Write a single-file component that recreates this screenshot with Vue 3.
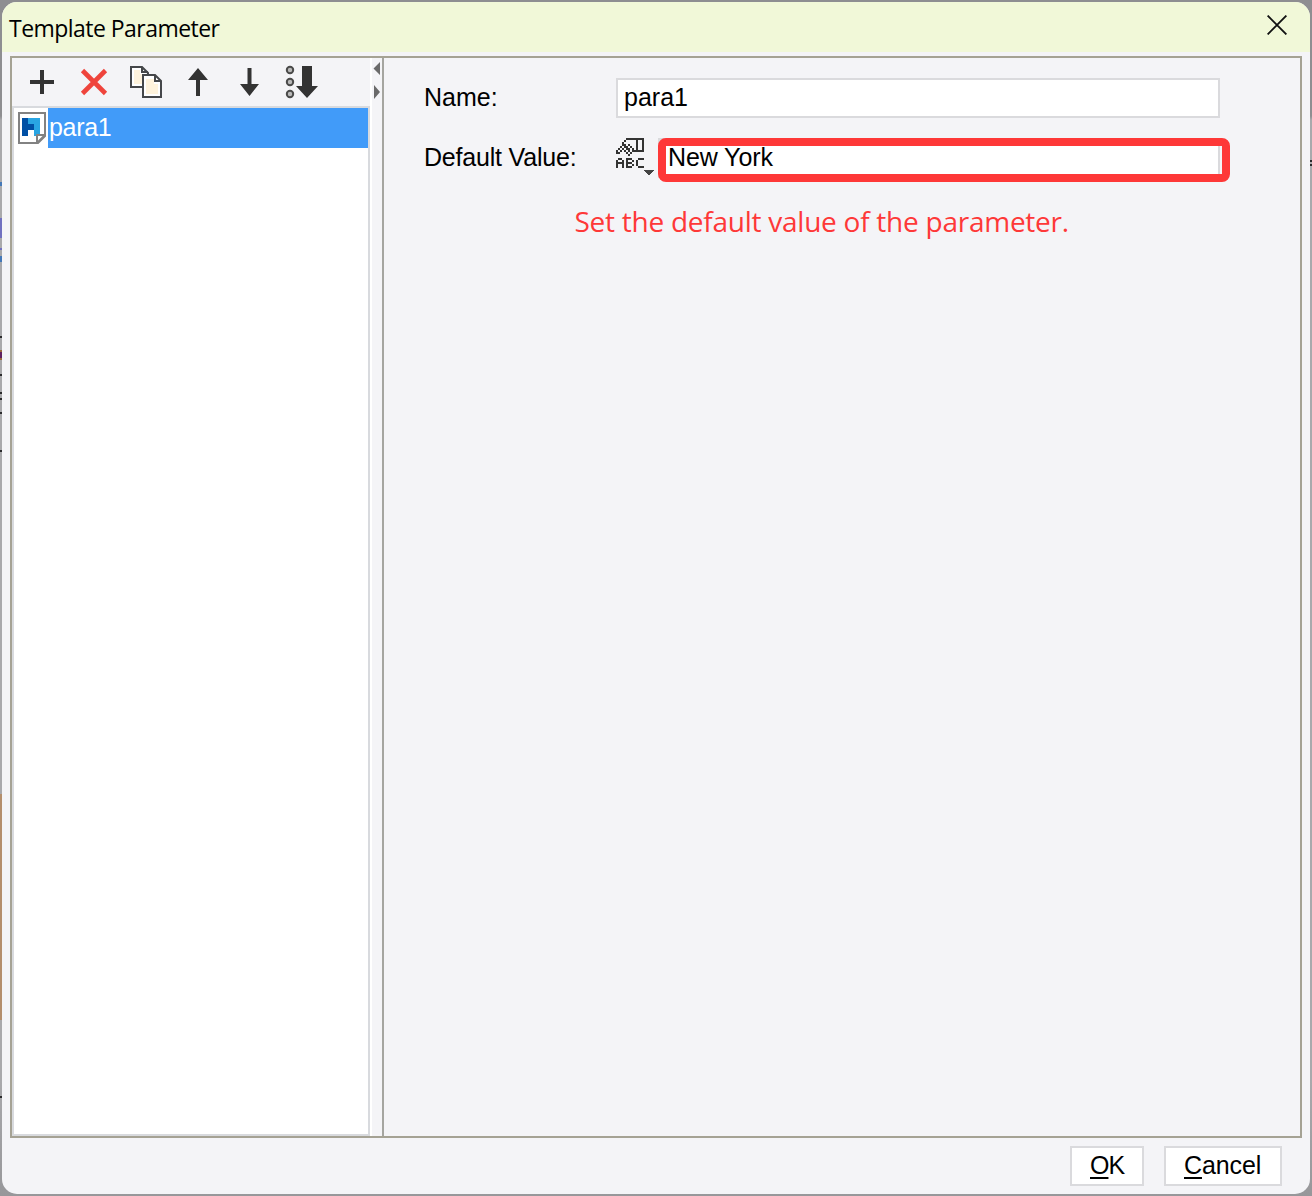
<script setup>
import { ref } from 'vue'

const name = ref('para1')
const value = ref('New York')
const params = ['para1']

// Each cell of the bitmap is a 2px square.
const typeGlyph = [
  '.....#########',
  '....#.....#..#',
  '...#......#..#',
  '...##.#...#..#',
  '..#.##.#..#..#',
  '.#.#.##.#.#..#',
  '#.#.#.#.######',
  '##...#.#......',
  '......#.......',
  '..............',
  '.##..###...###',
  '#..#.#..#.#...',
  '####.###..#...',
  '#..#.#..#.#...',
  '#..#.###...###',
]
const cells = typeGlyph.flatMap((row, y) =>
  [...row].flatMap((c, x) => (c === '#' ? [{ x: x * 2, y: y * 2 }] : []))
)

// Slivers of the window behind the dialog.
const edges = [
  { x: 0, y: 182, h: 4, c: '#4478b8' },
  { x: 0, y: 218, h: 20, c: '#7070c0' },
  { x: 0, y: 248, h: 2, c: '#7070c0' },
  { x: 0, y: 256, h: 6, c: '#4478b8' },
  { x: 0, y: 336, h: 2, c: '#2a2a2c' },
  { x: 0, y: 350, h: 10, c: '#9a6a40' },
  { x: 0, y: 352, h: 6, c: '#602060' },
  { x: 0, y: 374, h: 2, c: '#2a2a2c' },
  { x: 0, y: 392, h: 2, c: '#2a2a2c' },
  { x: 0, y: 398, h: 2, c: '#2a2a2c' },
  { x: 0, y: 412, h: 2, c: '#2a2a2c' },
  { x: 0, y: 450, h: 2, c: '#2a2a2c' },
  { x: 0, y: 794, h: 226, c: '#b48e6c' },
  { x: 0, y: 1096, h: 2, c: '#2a2a2c' },
  { x: 1310, y: 160, h: 2, c: '#2a2a2c' },
  { x: 1310, y: 164, h: 2, c: '#2a2a2c' },
]
</script>

<template>
  <div class="desktop">
    <i v-for="(e, i) in edges" :key="i" class="edge" :style="{ left: e.x + 'px', top: e.y + 'px', height: e.h + 'px', background: e.c }"></i>
    <div class="dialog">
      <header class="titlebar">
        <span class="title">Template Parameter</span>
        <svg class="close" width="20" height="20" viewBox="0 0 20 20"><path d="M.6.6 19.4 19.4M19.4.6.6 19.4" stroke="#111" stroke-width="1.9" fill="none" /></svg>
      </header>

      <main class="frame">
        <section class="side">
          <div class="toolbar">
            <svg width="310" height="48" viewBox="0 0 310 48">
              <path d="M18 24H42M30 12V36" stroke="#333" stroke-width="4" fill="none" />
              <path d="M70.5 12.5 93.5 35.5M93.5 12.5 70.5 35.5" stroke="#ef443c" stroke-width="4.6" fill="none" />
              <g stroke="#45474a" stroke-width="2" fill="#fff">
                <path d="M119 9H130L136 15V29H119Z" />
                <path d="M131 17H143L149 23V39H131Z" />
                <path d="M130 9V14H136M143 17V23H149" fill="none" />
              </g>
              <path d="M122 12H128V16H130V26H122ZM134 21H142V26H146V36H134Z" fill="#fff3dc" />
              <path d="M186 10 196 22H188V38H184V22H176Z" fill="#333" />
              <path d="M235.5 10H239.5V26H247L237.5 38 228 26H235.5Z" fill="#333" />
              <g fill="#b9b9b9" stroke="#4a4a4a" stroke-width="2">
                <circle cx="278" cy="12" r="3.2" /><circle cx="278" cy="24" r="3.2" /><circle cx="278" cy="36" r="3.2" />
              </g>
              <path d="M290 8H300V28H306L295 40 284 28H290Z" fill="#333" />
            </svg>
          </div>
          <ul class="list">
            <li v-for="p in params" :key="p">
              <svg width="34" height="40" viewBox="0 0 34 40">
                <path d="M5 5H31V28L24 35H5Z" fill="#fff" stroke="#828282" stroke-width="2" />
                <path d="M14 10H26V28H20V22H14Z" fill="#29a5e3" />
                <path d="M8 10H14V16H20V22H14V28H8Z" fill="#0050a5" />
                <path d="M23 35V27H31Z" fill="#fff" stroke="#828282" stroke-width="2" stroke-linejoin="round" />
              </svg>
              <span class="item">{{ p }}</span>
            </li>
          </ul>
        </section>
        <div class="splitter">
          <svg width="10" height="44" viewBox="0 0 10 44"><path d="M8 4V17L1.5 10.5ZM2 27V41L8 34Z" fill="#6b6b6b" /></svg>
        </div>
        <section class="form">
          <div class="row">
            <label class="name-label">Name:</label>
            <div class="field"><span>{{ name }}</span></div>
          </div>
          <div class="row second">
            <label class="value-label">Default Value:</label>
            <svg class="type" width="42" height="40" viewBox="0 0 42 40" shape-rendering="crispEdges">
              <rect v-for="c in cells" :key="`${c.x}-${c.y}`" :x="c.x" :y="c.y" width="2" height="2" fill="#333" />
              <path d="M28 32H38L33 38Z" fill="#444" />
            </svg>
            <div class="field value"><span>{{ value }}</span><i class="mark"></i></div>
          </div>
          <p class="note">Set the default value of the parameter.</p>
        </section>
      </main>

      <footer class="actions">
        <div class="btn ok"><span><u>O</u>K</span></div>
        <div class="btn cancel"><span><u>C</u>ancel</span></div>
      </footer>
    </div>
  </div>
</template>

<style>
body { margin: 0; }
</style>
<style scoped>
* { box-sizing: border-box; }
.desktop {
  position: relative; width: 1312px; height: 1196px; padding: 2px; overflow: hidden;
  background: linear-gradient(#8e8e91, #8e8e91 116px, #a9a9ac 120px, #a9a9ac 1080px, #97979a);
  font: 25px/39px "Liberation Sans", Arial, sans-serif; color: #000;
}
.edge { position: absolute; width: 2px; }
.dialog {
  position: relative; display: flex; flex-direction: column;
  width: 1308px; height: 1192px; border-radius: 15px; overflow: hidden; background: #f4f4f7;
}
.titlebar {
  height: 50px; flex: none; display: flex; justify-content: space-between;
  padding: 0 23px 0 7px; background: #f1f8d8;
}
.title { font: 23px/52px "Open Sans", sans-serif; letter-spacing: -.54px; white-space: nowrap; }
.close { margin-top: 13px; }
.frame {
  display: flex; flex: none; height: 1082px; margin: 4px 8px 0; border: 2px solid #a5a294;
}
.side { width: 358px; display: flex; flex-direction: column; }
.toolbar { height: 48px; flex: none; }
.toolbar svg { display: block; }
.list {
  flex: 1; margin: 0; padding: 0; list-style: none; background: #fff; border: 2px solid #d8dade;
}
.list li { display: flex; height: 40px; }
.item { flex: 1; padding-left: 1px; background: #419bf9; color: #fff; letter-spacing: -.3px; }
.splitter { width: 14px; border-left: 2px solid #fff; border-right: 2px solid #a5a5a0; }
.splitter svg { display: block; }
.form { flex: 1; padding: 20px 0 0 40px; }
.row { display: flex; height: 40px; }
.second { margin-top: 20px; }
label { width: 192px; flex: none; white-space: nowrap; }
.name-label { letter-spacing: 0; }
.value-label { letter-spacing: -.2px; }
.field {
  position: relative; width: 604px; padding-left: 6px; line-height: 35px;
  border: 2px solid #dadadd; background: #fff; white-space: nowrap;
}
.type { flex: none; display: block; }
.value { width: 562px; padding-left: 8px; letter-spacing: -.1px; }
.mark {
  position: absolute; left: -2px; top: -2px; width: 572px; height: 44px;
  border: 8px solid #fe3838; border-radius: 8px;
}
.note {
  margin: 19px 0 0 150.5px; font: 28px/48px "Open Sans", sans-serif; letter-spacing: -.25px; color: #fe3838; white-space: nowrap;
}
.actions { display: flex; justify-content: flex-end; gap: 20px; padding: 8px 28px 0 0; }
.btn { height: 40px; border: 2px solid #dadadd; background: #fff; line-height: 35px; padding-left: 18px; letter-spacing: -.1px; white-space: nowrap; }
.ok { width: 74px; letter-spacing: -1px; }
.cancel { width: 118px; }
u { text-decoration-thickness: 2px; text-underline-offset: 3px; text-decoration-skip-ink: none; }
</style>
